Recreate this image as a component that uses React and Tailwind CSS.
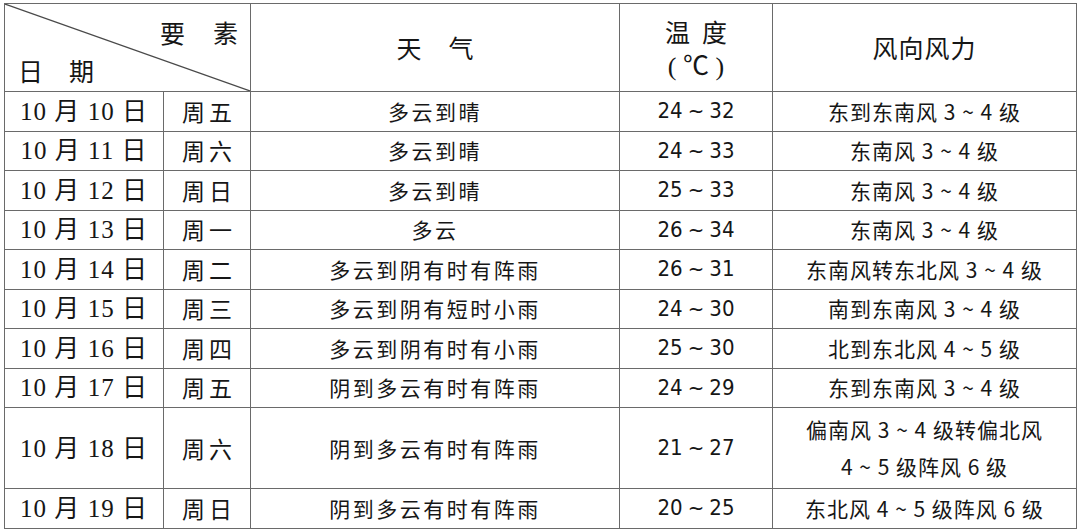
import React from 'react';

const rows = [
  { d: '10', w: '周五', sky: '多云到晴', lo: '24', hi: '32', wind: ['东到东南风 3 ~ 4 级'] },
  { d: '11', w: '周六', sky: '多云到晴', lo: '24', hi: '33', wind: ['东南风 3 ~ 4 级'] },
  { d: '12', w: '周日', sky: '多云到晴', lo: '25', hi: '33', wind: ['东南风 3 ~ 4 级'] },
  { d: '13', w: '周一', sky: '多云', lo: '26', hi: '34', wind: ['东南风 3 ~ 4 级'] },
  { d: '14', w: '周二', sky: '多云到阴有时有阵雨', lo: '26', hi: '31', wind: ['东南风转东北风 3 ~ 4 级'] },
  { d: '15', w: '周三', sky: '多云到阴有短时小雨', lo: '24', hi: '30', wind: ['南到东南风 3 ~ 4 级'] },
  { d: '16', w: '周四', sky: '多云到阴有时有小雨', lo: '25', hi: '30', wind: ['北到东北风 4 ~ 5 级'] },
  { d: '17', w: '周五', sky: '阴到多云有时有阵雨', lo: '24', hi: '29', wind: ['东到东南风 3 ~ 4 级'] },
  { d: '18', w: '周六', sky: '阴到多云有时有阵雨', lo: '21', hi: '27', wind: ['偏南风 3 ~ 4 级转偏北风', '4 ~ 5 级阵风 6 级'], tall: true },
  { d: '19', w: '周日', sky: '阴到多云有时有阵雨', lo: '20', hi: '25', wind: ['东北风 4 ~ 5 级阵风 6 级'] },
];

const cell = 'border-[1.5px] border-[#6a6a6a] p-0 text-center align-middle';

export default function App() {
  return (
    <div className="w-[1080px] h-[531px] bg-white pl-[4px] pt-[3px] text-[#161616]">
      <table className="border-collapse table-fixed w-[1072px]">
        <colgroup>
          <col className="w-[159px]" />
          <col className="w-[87px]" />
          <col className="w-[369px]" />
          <col className="w-[153px]" />
          <col className="w-[304px]" />
        </colgroup>
        <thead>
          <tr className="h-[88px] text-[25px] font-['Noto_Sans_CJK_SC',sans-serif]">
            <th colSpan={2} className={`${cell} relative font-normal`}>
              <svg className="absolute inset-0 w-full h-full" preserveAspectRatio="none" viewBox="0 0 100 100">
                <line x1="0" y1="0" x2="100" y2="100" stroke="#4a4a4a" strokeWidth="1.2" vectorEffect="non-scaling-stroke" />
              </svg>
              <div className="relative h-[86px] flex flex-col justify-between pt-[12px] pb-[6px] px-[12px] leading-[30px]">
                <div className="flex justify-end gap-[28px]"><span>要</span><span>素</span></div>
                <div className="flex justify-start gap-[26px] pl-[1px]"><span>日</span><span>期</span></div>
              </div>
            </th>
            <th className={`${cell} font-normal`}>
              <span className="tracking-[27px] pl-[27px]">天气</span>
            </th>
            <th className={`${cell} font-normal`}>
              <div className="flex flex-col items-center leading-[36px] pt-[2px]">
                <span className="tracking-[12px] pl-[12px]">温度</span>
                <span className="font-['Liberation_Serif','Noto_Sans_CJK_SC',serif] text-[26px]">( ℃ )</span>
              </div>
            </th>
            <th className={`${cell} font-normal`}>
              <span className="tracking-[1px]">风向风力</span>
            </th>
          </tr>
        </thead>
        <tbody>
          {rows.map((r) => (
            <tr key={r.d} className={r.tall ? 'h-[81px]' : 'h-[39.5px]'}>
              <td className={`${cell} font-['Liberation_Serif','Noto_Sans_CJK_SC',serif] text-[25px] tracking-[1px] leading-none`}>
                10 月 {r.d} 日
              </td>
              <td className={`${cell} font-['Noto_Sans_CJK_SC',sans-serif] text-[23px] tracking-[4px] pl-[4px] leading-none`}>
                {r.w}
              </td>
              <td className={`${cell} font-['Noto_Sans_CJK_SC',sans-serif] text-[21px] tracking-[2.5px] leading-none`}>
                {r.sky}
              </td>
              <td className={`${cell} font-['DejaVu_Sans_Condensed',sans-serif] text-[22px] leading-none`}>
                {r.lo}<span className="mx-[5px]">~</span>{r.hi}
              </td>
              <td className={`${cell} font-['Noto_Sans_CJK_SC',sans-serif] text-[21px] tracking-[1px] leading-[37px]`}>
                {r.wind.map((l) => (
                  <div key={l}>{l}</div>
                ))}
              </td>
            </tr>
          ))}
        </tbody>
      </table>
    </div>
  );
}
